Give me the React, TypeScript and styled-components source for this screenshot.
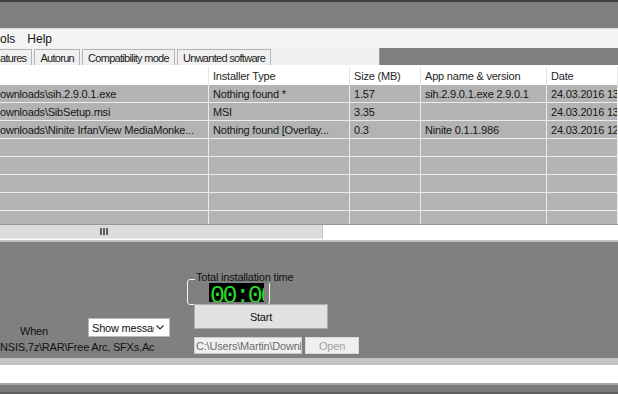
import React from "react";
import styled, { createGlobalStyle } from "styled-components";

const Global = createGlobalStyle`
  html, body { margin: 0; padding: 0; overflow: hidden; background: #808080; }
  * { box-sizing: border-box; }
`;

const UI_FONT = `"Liberation Sans", Arial, sans-serif`;

const Frame = styled.div`
  width: 618px;
  height: 394px;
  overflow: hidden;
  display: flex;
  flex-direction: column;
  font-family: ${UI_FONT};
  font-size: 11px;
  letter-spacing: -0.2px;
  color: #1a1a1a;
  background: #808080;
`;

const TitleArea = styled.div`
  height: 29px;
  flex: none;
  background: #7f7f7f;
  border-top: 2px solid #3d3d3d;
  border-bottom: 1px solid #d8d8d8;
`;

const MenuBar = styled.div`
  height: 19px;
  flex: none;
  background: #f5f5f5;
  display: flex;
  align-items: center;
  gap: 12px;
  font-size: 12px;
  letter-spacing: 0;
  padding-top: 1px;
`;

const MenuItem = styled.span`
  color: #111;
`;

const TabStrip = styled.div`
  height: 19px;
  flex: none;
  background: #f0f0f0;
  display: flex;
  align-items: flex-end;
  gap: 1px;
  border-bottom: 2px solid #ffffff;
`;

const Tab = styled.div`
  height: 16px;
  padding: 0 5px;
  margin-right: 1px;
  display: flex;
  align-items: center;
  background: #f0f0f0;
  border: 1px solid #b4b4b4;
  border-bottom: none;
  font-size: 11px;
  letter-spacing: -0.7px;
  color: #1a1a1a;
  white-space: nowrap;
`;

const FirstTab = styled(Tab)`
  border-left: none;
  padding-left: 0;
`;

const TabFiller = styled.div`
  margin-left: auto;
  width: 239px;
  height: 17px;
  align-self: flex-start;
  background: #808080;
  border-left: 1px solid #a0a0a0;
`;

const COLS = "209px 141px 71px 126px 1fr";

const HeaderRow = styled.div`
  display: grid;
  grid-template-columns: ${COLS};
  height: 18px;
  flex: none;
  background: #ffffff;
`;

const HeaderCell = styled.div<{ $first?: boolean }>`
  padding-left: ${(p) => (p.$first ? "0" : "4px")};
  border-right: 1px solid #e5e5e5;
  display: flex;
  align-items: center;
  color: #1e1e1e;
  white-space: nowrap;
  overflow: hidden;
`;

const Body = styled.div`
  height: 140px;
  flex: none;
  overflow: hidden;
  background: #b3b3b3;
  border-bottom: 1px solid #959595;
`;

const Row = styled.div`
  display: grid;
  grid-template-columns: ${COLS};
  height: 18px;
  border-bottom: 1px solid #ececec;
`;

const Cell = styled.div<{ $first?: boolean }>`
  padding-left: ${(p) => (p.$first ? "0" : "4px")};
  border-right: 1px solid #ececec;
  display: flex;
  align-items: center;
  padding-top: 1px;
  white-space: nowrap;
  overflow: hidden;
  color: #161616;
`;

const ScrollBar = styled.div`
  height: 17px;
  flex: none;
  display: flex;
  background: #ffffff;
  border-bottom: 2px solid #c3c3c3;
`;

const Thumb = styled.div`
  width: 323px;
  height: 14px;
  background: #dcdcdc;
  border-right: 1px solid #c6c6c6;
  border-bottom: 1px solid #eaeaea;
  display: flex;
  align-items: center;
  padding-left: 100px;
`;

const Grip = styled.svg`
  width: 9px;
  height: 7px;
  display: block;
`;

const BottomPanel = styled.div`
  height: 116px;
  flex: none;
  background: #808080;
  display: flex;
  align-items: flex-end;
  padding-bottom: 4px;
`;

const LeftBlock = styled.div`
  width: 187px;
  display: flex;
  flex-direction: column;
  gap: 2px;
`;

const WhenRow = styled.div`
  display: flex;
  align-items: center;
  padding-left: 20px;
  height: 19px;
`;

const WhenLabel = styled.span`
  width: 68px;
  color: #111;
  padding-top: 7px;
`;

const Combo = styled.div`
  width: 82px;
  height: 19px;
  background: #ffffff;
  border: 1px solid #b9b9b9;
  display: flex;
  align-items: center;
  justify-content: space-between;
  padding: 0 5px 0 3px;
  color: #111;
  white-space: nowrap;
  overflow: hidden;
`;

const ComboText = styled.span`
  width: 62px;
  overflow: hidden;
`;

const FormatText = styled.div`
  height: 15px;
  color: #111;
  white-space: nowrap;
  display: flex;
  align-items: center;
`;

const TimerBlock = styled.div`
  display: flex;
  flex-direction: column;
`;

const GroupBox = styled.div`
  position: relative;
  width: 83px;
  height: 26px;
  border: 1px solid #f4f4f4;
  border-radius: 3px;
`;

const GroupLabel = styled.span`
  position: absolute;
  left: 7px;
  top: -9px;
  padding: 0 1px;
  line-height: 12px;
  background: #808080;
  color: #111;
  white-space: nowrap;
`;

const Clock = styled.div`
  position: absolute;
  left: 21px;
  top: 3px;
  width: 55px;
  height: 19px;
  background: #000000;
  overflow: hidden;
  font-family: "Liberation Mono", "DejaVu Sans Mono", monospace;
  font-size: 25px;
  line-height: 25px;
  letter-spacing: -2.4px;
  color: #2bd62b;
  padding-top: 1px;
  padding-left: 1px;
  white-space: nowrap;
`;

const StartButton = styled.div`
  margin-top: -1px;
  margin-left: 7px;
  width: 134px;
  height: 25px;
  background: #e1e1e1;
  border: 1px solid #adadad;
  display: flex;
  align-items: center;
  justify-content: center;
  color: #111;
  position: relative;
`;

const PathRow = styled.div`
  margin-top: 8px;
  margin-left: 7px;
  display: flex;
  gap: 3px;
  height: 17px;
`;

const PathInput = styled.div`
  width: 108px;
  background: #f0f0f0;
  border: 1px solid #cccccc;
  color: #6d6d6d;
  white-space: nowrap;
  overflow: hidden;
  display: flex;
  align-items: center;
  padding-left: 1px;
`;

const OpenButton = styled.div`
  width: 54px;
  background: #efefef;
  border: 1px solid #d9d9d9;
  display: flex;
  align-items: center;
  justify-content: center;
  color: #a3a3a3;
`;

const LightBand = styled.div`
  height: 7px;
  flex: none;
  background: #c4c4c4;
`;

const WhiteBand = styled.div`
  height: 20px;
  flex: none;
  background: #ffffff;
  border-bottom: 2px solid #a5a5a5;
`;

const BottomEdge = styled.div`
  flex: 1;
  background: #7a7a7a;
  border-bottom: 2px solid #5e5e5e;
`;

type Entry = { path: string; type: string; size: string; app: string; date: string };

const entries: Entry[] = [
  { path: "ownloads\\sih.2.9.0.1.exe", type: "Nothing found *", size: "1.57", app: "sih.2.9.0.1.exe 2.9.0.1", date: "24.03.2016 13:" },
  { path: "ownloads\\SibSetup.msi", type: "MSI", size: "3.35", app: "", date: "24.03.2016 13:" },
  { path: "ownloads\\Ninite IrfanView MediaMonke...", type: "Nothing found [Overlay...", size: "0.3", app: "Ninite 0.1.1.986", date: "24.03.2016 12:" },
];

const emptyRows = 5;

export default function App() {
  return (
    <>
      <Global />
      <Frame>
        <TitleArea />
        <MenuBar>
          <MenuItem>ols</MenuItem>
          <MenuItem>Help</MenuItem>
        </MenuBar>
        <TabStrip>
          <FirstTab>atures</FirstTab>
          <Tab>Autorun</Tab>
          <Tab>Compatibility mode</Tab>
          <Tab>Unwanted software</Tab>
          <TabFiller />
        </TabStrip>
        <HeaderRow>
          <HeaderCell $first />
          <HeaderCell>Installer Type</HeaderCell>
          <HeaderCell>Size (MB)</HeaderCell>
          <HeaderCell>App name &amp; version</HeaderCell>
          <HeaderCell>Date</HeaderCell>
        </HeaderRow>
        <Body>
          {entries.map((e) => (
            <Row key={e.path}>
              <Cell $first>{e.path}</Cell>
              <Cell>{e.type}</Cell>
              <Cell>{e.size}</Cell>
              <Cell>{e.app}</Cell>
              <Cell>{e.date}</Cell>
            </Row>
          ))}
          {Array.from({ length: emptyRows }).map((_, i) => (
            <Row key={`empty-${i}`}>
              <Cell $first />
              <Cell />
              <Cell />
              <Cell />
              <Cell />
            </Row>
          ))}
        </Body>
        <ScrollBar>
          <Thumb>
            <Grip viewBox="0 0 9 7">
              <rect x="0" y="0" width="2" height="7" fill="#5f5f5f" />
              <rect x="3" y="0" width="2" height="7" fill="#5f5f5f" />
              <rect x="6" y="0" width="2" height="7" fill="#5f5f5f" />
            </Grip>
          </Thumb>
        </ScrollBar>
        <BottomPanel>
          <LeftBlock>
            <WhenRow>
              <WhenLabel>When</WhenLabel>
              <Combo>
                <ComboText>Show messag</ComboText>
                <svg width="8" height="5" viewBox="0 0 8 5">
                  <path d="M0.5 0.5 L4 4 L7.5 0.5" fill="none" stroke="#333" strokeWidth="1.2" />
                </svg>
              </Combo>
            </WhenRow>
            <FormatText>NSIS,7z\RAR\Free Arc, SFXs,Ac</FormatText>
          </LeftBlock>
          <TimerBlock>
            <GroupBox>
              <GroupLabel>Total installation time</GroupLabel>
              <Clock>00:00</Clock>
            </GroupBox>
            <StartButton>Start</StartButton>
            <PathRow>
              <PathInput>C:\Users\Martin\Downl</PathInput>
              <OpenButton>Open</OpenButton>
            </PathRow>
          </TimerBlock>
        </BottomPanel>
        <LightBand />
        <WhiteBand />
        <BottomEdge />
      </Frame>
    </>
  );
}
